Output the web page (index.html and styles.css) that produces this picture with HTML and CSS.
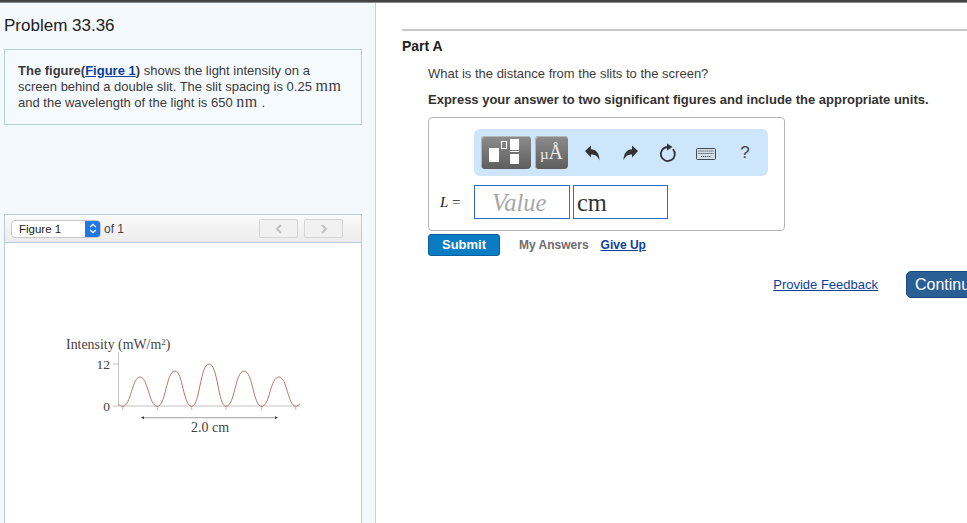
FILE: index.html
```html
<!DOCTYPE html>
<html lang="en">
<head>
<meta charset="utf-8">
<title>Problem 33.36</title>
<link rel="stylesheet" href="styles.css">
</head>
<body>
<div class="topbar"></div>
<div class="page">
  <aside class="left">
    <h1 class="title">Problem 33.36</h1>
    <div class="intro"><b>The figure(<a href="#">Figure 1</a>)</b> shows the light intensity on a screen behind a double slit. The slit spacing is 0.25 <span class="math">mm</span> and the wavelength of the light is 650 <span class="math">nm</span> .</div>
    <section class="figure">
      <div class="figbar">
        <div class="select"><span class="select-label">Figure 1</span><span class="select-arrows"><svg width="8" height="11" viewBox="0 0 8 11"><path d="M1.2 4 4 1.3 6.8 4M1.2 7 4 9.7 6.8 7" fill="none" stroke="#fff" stroke-width="1.3"/></svg></span></div>
        <span class="of">of 1</span>
        <div class="pager">
          <span class="pagebtn"><svg width="8" height="10" viewBox="0 0 8 10"><path d="M6 1 2 5l4 4" fill="none" stroke="#c2c2c2" stroke-width="2"/></svg></span>
          <span class="pagebtn"><svg width="8" height="10" viewBox="0 0 8 10"><path d="m2 1 4 4-4 4" fill="none" stroke="#c2c2c2" stroke-width="2"/></svg></span>
        </div>
      </div>
      <div class="figbody">
        <svg class="chart" width="350" height="130" viewBox="5 325 350 130">
          <text x="66" y="349" class="chart-text label">Intensity (mW/m<tspan class="sup" dy="-4">2</tspan><tspan dy="4">)</tspan></text>
          <text x="110" y="369" text-anchor="end" class="chart-text big">12</text>
          <text x="110" y="411" text-anchor="end" class="chart-text big">0</text>
          <path d="M118.5 352V406M113 364h5.500M113 406h5.500M118.500 406H300" fill="none" stroke="#b5b5b5" stroke-width=".8"/>
          <path d="M122.700 406v4M157.300 406v4M191.700 406v4M226 406v4M261.700 406v4M295.700 406v4" fill="none" stroke="#a9a9a9" stroke-width=".8"/>
          <path d="M118.500 404.500C120 405 121 406.300 122.700 406.300 C131 406.300 132 377 140 377 C148 377 149 406.300 157.300 406.300 C166 406.300 166 371 175 371 C183 371 183 406.300 191.700 406.300 C200 406.300 200 364 209 364 C218 364 218 406.300 226 406.300 C235 406.300 235 371 244 371 C253 371 253 406.300 261.700 406.300 C270 406.300 270 377 279 377 C287 377 288 406.300 295.700 406.300 C297.500 406.300 298.500 405 300 404" fill="none" stroke="#bb7764" stroke-width="1"/>
          <path d="M142 417.700H277" stroke="#777" stroke-width=".7"/>
          <path d="M141 417.700l3-1.400v2.800zM278 417.700l-3-1.400v2.800z" fill="#333"/>
          <text x="210" y="432" text-anchor="middle" class="chart-text cm">2.0 cm</text>
        </svg>
      </div>
    </section>
  </aside>
  <main class="right">
    <h2 class="part">Part A</h2>
    <div class="question">
      <p class="q">What is the distance from the slits to the screen?</p>
      <p class="express">Express your answer to two significant figures and include the appropriate units.</p>
      <div class="answer">
        <div class="toolbar">
          <span class="tool-dark wide">
            <svg width="50" height="33" viewBox="0 0 50 33"><rect x="8" y="12" width="10" height="14" fill="#fff"/><rect x="20.500" y="5.500" width="5" height="7" fill="none" stroke="#fff" stroke-width="1"/><rect x="29" y="3" width="9" height="11" fill="#fff"/><rect x="29" y="15" width="9" height="1" fill="#fff"/><rect x="29" y="18" width="9" height="10" fill="#fff"/></svg>
          </span>
          <span class="tool-dark narrow"><span class="mu">µ</span>Å</span>
          <span class="tool"><svg width="15" height="16" viewBox="0 0 15 16"><path d="M0 6 6 .5v3.800c5 0 8.500 4 8.500 11.200C13 11.500 10.500 9.500 6 9.500v3z" fill="#333"/></svg></span>
          <span class="tool"><svg width="15" height="16" viewBox="0 0 15 16"><path d="M15 6 9 .5v3.800c-5 0-8.500 4-8.500 11.200C2 11.500 4.500 9.500 9 9.500v3z" fill="#333"/></svg></span>
          <span class="tool"><svg width="18" height="20" viewBox="0 0 18 20"><path d="M8.500 4A7 7 0 1 0 13.900 6.200" fill="none" stroke="#333" stroke-width="1.800"/><path d="M8 .5v7L13.500 4z" fill="#333"/></svg></span>
          <span class="tool keyboard"><svg width="20" height="12" viewBox="0 0 20 12"><rect x=".5" y=".5" width="19" height="11" rx="1" fill="#d3dde6" stroke="#3f4a54"/><path d="M2.500 3h15M2.500 5.500h15M5 8.500h10" stroke="#3f4a54" stroke-width="1.200" stroke-dasharray="1.200 .8"/></svg></span>
          <span class="tool help">?</span>
        </div>
        <div class="inputs">
          <span class="var"><i>L</i> =</span>
          <div class="field value">Value</div>
          <div class="field unit">cm</div>
        </div>
      </div>
      <div class="actions">
        <a class="submit" href="#">Submit</a>
        <span class="my">My Answers</span>
        <a class="giveup" href="#">Give Up</a>
      </div>
    </div>
    <div class="footer">
      <a class="feedback" href="#">Provide Feedback</a>
      <a class="continue" href="#">Continue</a>
    </div>
  </main>
</div>
</body>
</html>
```
FILE: styles.css
```css
* { box-sizing: border-box; }
html, body { margin: 0; height: 100%; overflow: hidden; }
body { background: #fff; font-family: "Liberation Sans", Arial, sans-serif; color: #333; }
.topbar { height: 3px; background: #444; border-bottom: 1px solid #888; }
.page { display: flex; height: 520px; }
.left { flex: 0 0 376px; min-width: 0; background: #f4f9fe; border-right: 1px solid #c5d3e0; padding: 14px 13px 0 4px; display: flex; flex-direction: column; }
.title { margin: 0; font-size: 17px; font-weight: 400; line-height: 18px; color: #222; }
.intro { margin-top: 14px; height: 76px; background: #f5faff; border: 1px solid #b9cde0; padding: 13px 13px 0 13px; font-size: 13px; line-height: 16px; color: #3c3c3c; }
.intro a, .giveup, .feedback { color: #0b3f9a; }
.math { font-family: "Liberation Serif", serif; font-size: 16px; letter-spacing: .6px; line-height: 0; }
.figure { margin-top: 89px; flex: 1; background: #fff; border: 1px solid #b9cde0; border-bottom: 0; }
.figbar { height: 28px; display: flex; align-items: center; padding: 0 18px 0 6px; background: linear-gradient(#fafafa, #ececec); border-bottom: 1px solid #b9cde0; }
.select { display: flex; width: 90px; height: 18px; background: #fff; border: 1px solid #c8c8c8; border-radius: 4px; overflow: hidden; font-size: 11.500px; line-height: 16px; color: #222; }
.select-label { flex: 1; padding-left: 7px; }
.select-arrows { width: 15px; background: #1f78e8; display: flex; align-items: center; justify-content: center; }
.of { margin-left: 3px; font-size: 12px; color: #444; }
.pager { margin-left: auto; display: flex; gap: 6px; }
.pagebtn { width: 39px; height: 19px; display: flex; align-items: center; justify-content: center; border: 1px solid #d5d5d5; border-radius: 2px; background: #f1f1f1; }
.figbody { padding-top: 82px; }
.chart { display: block; }
.chart-text { font-family: "Liberation Serif", serif; font-size: 12px; fill: #444; }
.chart-text.label { font-size: 13.900px; }
.chart-text.cm { font-size: 14px; }
.chart-text.big { font-size: 13.500px; }
.sup { font-size: 9px; }
.right { flex: 1; min-width: 0; padding: 26px 0 0 26px; overflow: hidden; }
.part { margin: 0; padding-top: 7px; border-top: 2px solid #c8c8c8; font-size: 14px; line-height: 16px; font-weight: 700; color: #222; }
.question { padding-left: 26px; }
.q { margin: 12px 0 0; font-size: 13px; line-height: 16px; color: #3c3c3c; }
.express { margin: 10px 0 0; font-size: 13px; line-height: 16px; font-weight: 700; color: #333; }
.answer { margin-top: 9px; width: 357px; height: 114px; border: 1px solid #b5b5b5; border-radius: 4px; padding: 11px 16px 0 45px; }
.toolbar { height: 47px; display: flex; align-items: center; padding-left: 7px; background: #cde6fb; border-radius: 6px; }
.tool-dark { height: 33px; display: flex; align-items: center; justify-content: center; background: linear-gradient(#8d8d8d, #5d5d5d); border-radius: 4px; box-shadow: inset 1px 1px 0 #b5b5b5; color: #eee; font-family: "Liberation Serif", serif; font-size: 20px; }
.mu { font-size: 15px; padding-top: 3px; }
.wide { width: 50px; margin-right: 4px; }
.narrow { width: 33px; }
.tool { width: 38px; display: flex; align-items: center; justify-content: center; }
.tool:nth-child(3) { margin-left: 5px; }
.keyboard { margin-top: 3px; }
.help { font-size: 17px; color: #444; padding-left: 2px; }
.inputs { display: flex; align-items: center; margin-top: 9px; margin-left: -34px; }
.var { width: 34px; font-family: "Liberation Serif", serif; font-size: 15px; color: #222; }
.field { height: 34px; border: 1px solid #2f6cc7; font-family: "Liberation Serif", serif; font-size: 24.500px; line-height: 33px; }
.value { width: 96px; color: #a8a8a8; font-style: italic; padding-left: 17px; margin-right: 3px; }
.unit { width: 95px; padding-left: 3px; color: #333; }
.actions { display: flex; align-items: center; margin-top: 3px; font-size: 12px; font-weight: 700; }
.submit { width: 72px; height: 22px; line-height: 20px; text-align: center; background: #0a7cc4; border: 1px solid #0a5f9c; border-radius: 3px; color: #fff; text-decoration: none; font-size: 13px; }
.my { margin-left: 19px; color: #6d6d6d; }
.giveup { margin-left: 12px; }
.footer { display: flex; align-items: center; justify-content: flex-end; margin-top: 15px; margin-right: -39px; white-space: nowrap; }
.feedback { font-size: 13px; }
.continue { margin-left: 28px; width: 100px; height: 27px; line-height: 25px; padding-left: 8px; background: #2a5f96; border: 1px solid #1d4a7c; border-radius: 5px; color: #fff; font-size: 16px; text-decoration: none; }
```
